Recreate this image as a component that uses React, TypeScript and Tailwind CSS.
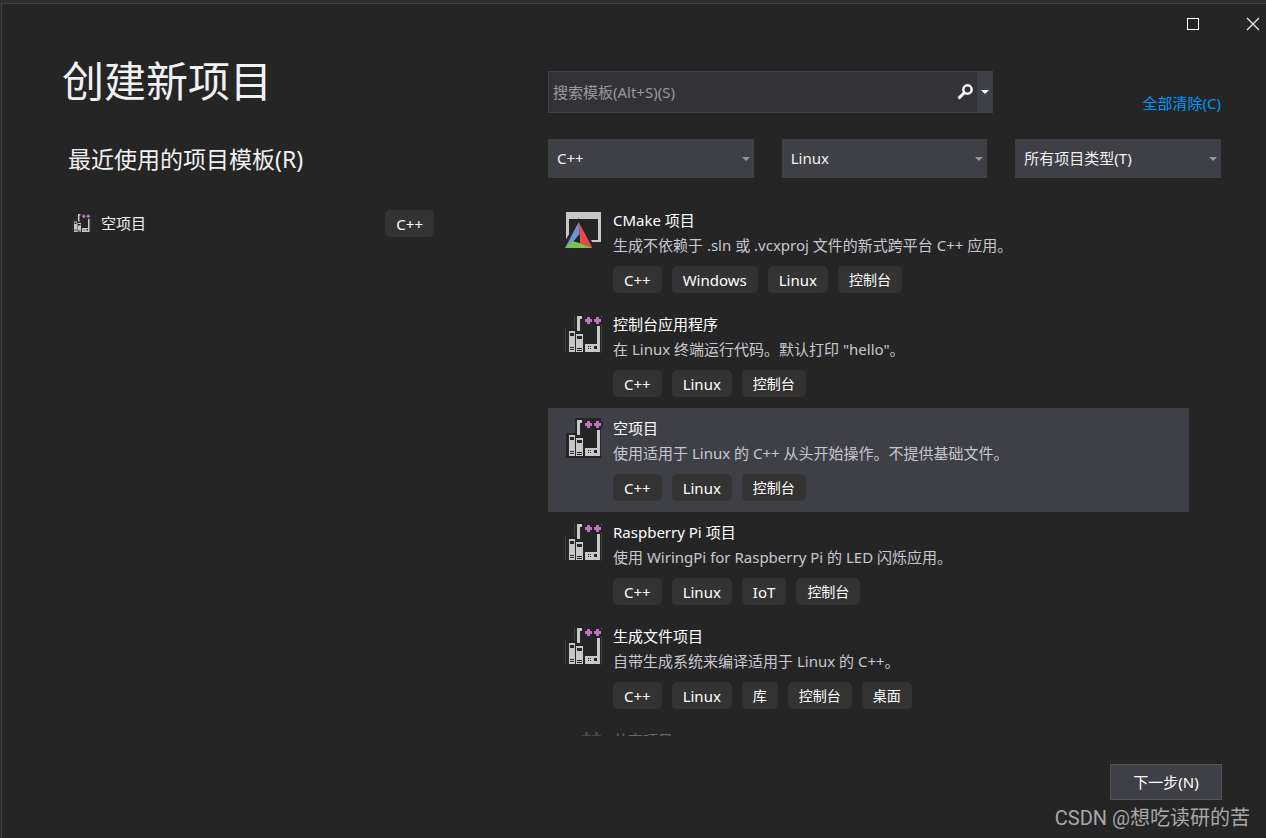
import React from 'react';

type Template = {
  title: string;
  desc: string;
  tags: string[];
  icon: 'cmake' | 'linux' | 'shared';
  selected?: boolean;
  faded?: boolean;
};

const templates: Template[] = [
  { title: 'CMake 项目', desc: '生成不依赖于 .sln 或 .vcxproj 文件的新式跨平台 C++ 应用。', tags: ['C++', 'Windows', 'Linux', '控制台'], icon: 'cmake' },
  { title: '控制台应用程序', desc: '在 Linux 终端运行代码。默认打印 "hello"。', tags: ['C++', 'Linux', '控制台'], icon: 'linux' },
  { title: '空项目', desc: '使用适用于 Linux 的 C++ 从头开始操作。不提供基础文件。', tags: ['C++', 'Linux', '控制台'], icon: 'linux', selected: true },
  { title: 'Raspberry Pi 项目', desc: '使用 WiringPi for Raspberry Pi 的 LED 闪烁应用。', tags: ['C++', 'Linux', 'IoT', '控制台'], icon: 'linux' },
  { title: '生成文件项目', desc: '自带生成系统来编译适用于 Linux 的 C++。', tags: ['C++', 'Linux', '库', '控制台', '桌面'], icon: 'linux' },
  { title: '共享项目', desc: '', tags: [], icon: 'shared', faded: true },
];

const filters = [
  { label: '语言', value: 'C++' },
  { label: '平台', value: 'Linux' },
  { label: '项目类型', value: '所有项目类型(T)' },
];

const LinuxIcon = ({ className }: { className: string }) => (
  <svg viewBox="0 0 38 40" className={className} aria-hidden="true">
    <path d="M10 0H36V2H38V8H37V40H0V15H10Z" fill="#252526" />
    <path d="M36 10H37V39H36Z M0 15H1V39H0Z M9 1H10V15H9Z M36 1H37V3H38V4H36Z" fill="#414143" />
    {/* tower back edge */}
    <path d="M12 2H17V5H15V17H12Z" fill="#c8c8c8" />
    {/* two servers */}
    <path d="M4 17H10V38H4Z M11 20H18V38H11Z" fill="#c8c8c8" />
    <path d="M5 19H9V22H5Z M5 33H9V34H5Z M5 35H9V36H5Z M12 22H17V25H12Z M12 34H17V35H12Z M12 36H17V37H12Z" fill="#252526" />
    {/* board */}
    <path d="M32 12H35V38H20V30H32Z" fill="#c8c8c8" />
    <path d="M23 32H24V33H23Z M25 32H26V33H25Z M23 34H24V35H23Z M25 34H26V35H25Z M29 32H32V35H29Z" fill="#252526" />
    {/* plus plus */}
    <path d="M22 3H25V5H27V8H25V10H22V8H20V5H22Z M31 3H34V5H36V8H34V10H31V8H29V5H31Z" fill="#bb73bb" />
  </svg>
);

const SharedIcon = ({ className }: { className: string }) => (
  <svg viewBox="0 0 38 40" className={className} aria-hidden="true">
    <path d="M20 2H23V5H26V8H23V11H20V8H17V5H20Z M30 2H33V5H36V8H33V11H30V8H27V5H30Z" fill="#bb73bb" />
  </svg>
);

const CMakeIcon = ({ className }: { className: string }) => (
  <svg viewBox="0 0 38 40" className={className} aria-hidden="true">
    <path d="M1 2H36V32H1Z M4 9V30H33V9Z" fill="#c8c8c8" fillRule="evenodd" />
    <path d="M13.700 8L31 39H0V31Z" fill="#252526" />
    <path d="M13.700 12L14.500 24L9 31L0 38Z" fill="#6a94d4" />
    <path d="M13.700 12L27.500 38L15 33L14.500 24Z" fill="#e8494f" />
    <path d="M7 31L15 33L27.500 38H0Z" fill="#7cc24c" />
    <path d="M14.500 24L15 33L9 31Z" fill="#252526" />
  </svg>
);

const icons = { cmake: CMakeIcon, linux: LinuxIcon, shared: SharedIcon };

const Arrow = ({ className }: { className: string }) => (
  <svg viewBox="0 0 8 4" className={className} aria-hidden="true">
    <path d="M0 0H8L4 4Z" fill="currentColor" />
  </svg>
);

// Chinese labels are set one size smaller than the latin ones
const Tag = ({ label }: { label: string }) => (
  <span
    className={`h-[27px] rounded-[5px] bg-[#333334] px-[11px] text-white ${
      /^[\x20-\x7e]+$/.test(label) ? 'text-[15px]/7' : 'text-[14px]/7'
    }`}
  >
    {label}
  </span>
);

export default function App() {
  return (
    <div
      className="relative flex h-screen flex-col overflow-hidden border-l border-[#2d2d30] bg-[#252526] text-[15px] text-[#f1f1f1]"
      style={{ fontFamily: "'Noto Sans', 'Noto Sans CJK SC', sans-serif" }}
    >
      <div className="h-1 shrink-0 border-b border-[#3f3f46] bg-[#2d2d30]" />
      <div className="flex min-h-0 flex-1 flex-col border-l border-[#3f3f46]">
        <header className="flex h-10 shrink-0 justify-end gap-10">
          <button aria-label="最大化" className="flex w-5 items-center justify-center">
            <svg viewBox="0 0 14 14" className="size-[14px]" shapeRendering="crispEdges">
              <rect x="1.500" y="1.500" width="11" height="11" fill="none" stroke="#fff" />
            </svg>
          </button>
          <button aria-label="关闭" className="mr-[3px] flex w-5 items-center justify-center">
            <svg viewBox="0 0 14 14" className="size-[14px]">
              <path d="M1 1L13 13M13 1L1 13" stroke="#f1f1f1" strokeWidth="1.200" />
            </svg>
          </button>
        </header>

        <main className="grid min-h-0 flex-1 grid-cols-[546fr_718fr]">
          <section className="pl-[60px] pt-[7px]">
            <h1 className="text-[42px] leading-[60px]">创建新项目</h1>
            <h2 className="ml-1.5 mt-8 text-[23px] leading-8">最近使用的项目模板(R)</h2>
            <button className="ml-[10px] mt-8 flex h-8 w-[362px] items-center text-left">
              <LinuxIcon className="h-5 w-[19px]" />
              <span className="ml-2.5 flex-1">空项目</span>
              <Tag label="C++" />
            </button>
          </section>

          <section className="flex min-h-0 flex-col pr-[45px] pt-[27px]">
            <div className="flex h-[42px] items-start justify-between">
              <div className="flex h-[42px] w-full max-w-[445px] border border-[#3f3f46] bg-[#333337]">
                <input
                  aria-label="搜索模板"
                  placeholder="搜索模板(Alt+S)(S)"
                  className="min-w-0 flex-1 bg-transparent pl-1 outline-none placeholder:text-[#999999]"
                />
                <button aria-label="搜索" className="flex w-6 items-center justify-center">
                  <svg viewBox="0 0 16 16" className="size-4">
                    <circle cx="10.500" cy="5.500" r="4.200" fill="none" stroke="#fff" strokeWidth="2.400" />
                    <path d="M7.500 8.500L1.500 14.500" stroke="#fff" strokeWidth="3" />
                  </svg>
                </button>
                <button aria-label="搜索选项" className="flex w-[15px] items-center justify-center bg-[#3f3f46]">
                  <Arrow className="h-1 w-2 text-white" />
                </button>
              </div>
              <a href="#" className="mt-5 shrink-0 leading-6 text-[#0097fb]">全部清除(C)</a>
            </div>

            <div className="mt-[26px] grid grid-cols-3 gap-7">
              {filters.map((f) => (
                <div key={f.label} className="relative">
                  <select aria-label={f.label} className="block h-[39px] w-full appearance-none bg-[#3f3f46] px-[9px] outline-none">
                    <option>{f.value}</option>
                  </select>
                  <Arrow className="pointer-events-none absolute right-1 top-[18px] h-1 w-2 text-[#999999]" />
                </div>
              ))}
            </div>

            <ul className="mr-8 mt-[22px] min-h-0 flex-1 overflow-hidden">
              {templates.map((t) => {
                const Icon = icons[t.icon];
                return (
                  <li key={t.title} className={t.faded ? 'opacity-30' : ''}>
                    <button className={`flex h-[104px] w-full items-start pl-[17px] text-left ${t.selected ? 'bg-[#3f3f46]' : ''}`}>
                      <Icon className="mt-[10px] h-10 w-[38px] shrink-0" />
                      <div className="ml-2.5 pt-2">
                        <p className="leading-6 text-white">{t.title}</p>
                        <p className="mt-px leading-6 text-[#c8c8d0]">{t.desc}</p>
                        <div className="mt-[9px] flex gap-2.5">
                          {t.tags.map((tag) => (
                            <Tag key={tag} label={tag} />
                          ))}
                        </div>
                      </div>
                    </button>
                  </li>
                );
              })}
            </ul>
          </section>
        </main>

        <footer className="flex shrink-0 justify-end pb-[38px] pr-11 pt-7">
          <button className="h-9 w-28 border border-[#555555] bg-[#3f3f46] text-white">下一步(N)</button>
        </footer>
      </div>

      {/* sliver of the window behind */}
      <div className="absolute -left-px bottom-[143px] h-[27px] w-px bg-[#007acc]" />
      <p
        className="absolute bottom-1 right-4 text-xl leading-8 text-[#a8a8a8]"
        style={{ fontFamily: "Roboto, 'Noto Sans CJK SC', sans-serif" }}
      >
        CSDN @想吃读研的苦
      </p>
    </div>
  );
}
